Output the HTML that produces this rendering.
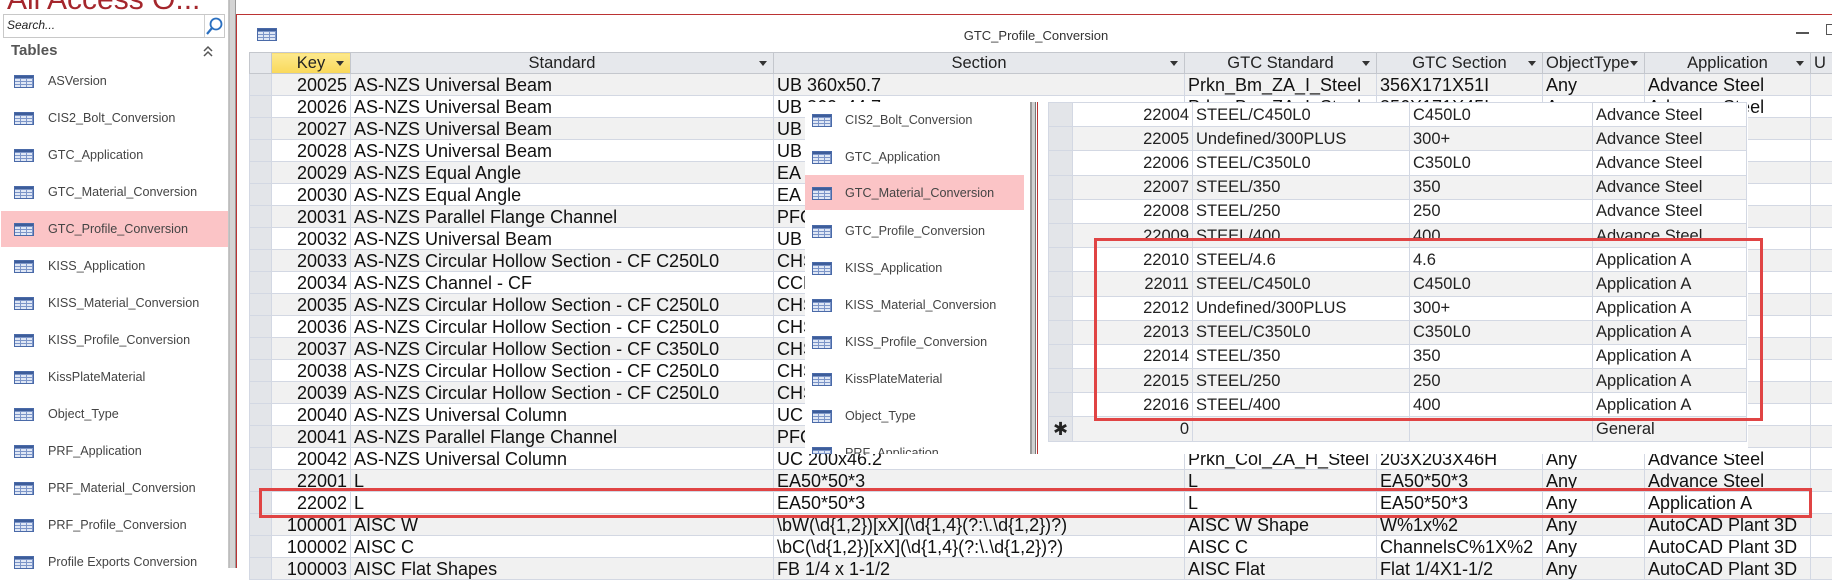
<!DOCTYPE html>
<html><head><meta charset="utf-8">
<style>
*{box-sizing:border-box;margin:0;padding:0}
body{width:1832px;height:568px;overflow:hidden;background:#fff;font-family:"Liberation Sans",Arial,sans-serif;position:relative}
.abs{position:absolute}
.nav{left:0;top:0;width:229px;height:568px;background:#fff;border-right:1px solid #c6c6c6}
.apptitle{left:7px;top:-17px;font-size:30px;color:#a4262c;white-space:nowrap}
.search{left:3px;top:14px;width:222px;height:24px;border:1px solid #c8c8c8;background:#fff}
.search span{position:absolute;left:3px;top:3px;font-size:12px;font-style:italic;color:#222}
.search .btn{position:absolute;right:0;top:0;width:20px;height:22px;border-left:1px solid #d0d0d0}
.tables{left:11px;top:42px;font-size:15px;font-weight:bold;color:#555}
.item{position:absolute;height:36px;font-size:12.6px;color:#444;white-space:nowrap}
.item .ic{position:absolute;top:12px;width:20px;height:13px;background:
 linear-gradient(#3d5d9a,#3d5d9a) 0 0/100% 3px no-repeat,#dfe7f5;border:1px solid #4a6aa8}
.item .ic:after{content:"";position:absolute;inset:2px 0 0 0;background:
 repeating-linear-gradient(90deg,transparent 0 5px,#7c95c8 5px 6px),
 repeating-linear-gradient(0deg,transparent 0 2px,#7c95c8 2px 3px)}
.grayv{left:229px;top:0;width:7px;height:568px;background:#d4d4d4;border-left:1px solid #bdbdbd;border-right:1px solid #9a9a9a}
.redv{left:236px;top:14px;width:1px;height:554px;background:#b33}
.redh{left:236px;top:14px;width:1596px;height:1px;background:#b33}
.title{left:236px;top:28px;width:1600px;text-align:center;font-size:13px;color:#333}
table{border-collapse:collapse;table-layout:fixed}
td{border:1px solid #d3d8e3;overflow:hidden;white-space:nowrap;padding:0 3px;color:#111}
#grid{position:absolute;left:249px;top:52px;width:1621px}
#grid td{height:22px;font-size:18px;line-height:20px}
#grid tr.h td{height:21px;background:#e6e8ec;border:1px solid #c4c7cd;color:#222;text-align:center;position:relative;font-size:16.5px}
#grid tr.h td.key{background:linear-gradient(#fde98d,#f9d85a)}
.arr{position:absolute;right:6px;top:8px;width:0;height:0;border-left:4px solid transparent;border-right:4px solid transparent;border-top:5px solid #333}
#grid td.sel,#pt td.sel{background:#e3e5e9}
#grid tr.g td{background:#f1f1f1}
#grid tr.g td.sel,#pt tr.g td.sel{background:#e3e5e9}
td.r{text-align:right}
.pnav{left:805px;top:102px;width:219px;height:352px;background:#fff;overflow:hidden}
.sep{left:1024px;top:102px;width:24px;height:352px;background:#fff}
.sep i{position:absolute;top:0;height:352px}
#pt{position:absolute;left:1048px;top:102px;width:698px}
#pt td{height:24.2px;font-size:16.5px;color:#222;line-height:22px}
#pt tr.g td{background:#f2f2f2}
.pbg{left:1048px;top:102px;width:700px;height:352px;background:#fff}
.rbox{position:absolute;border:3px solid #e04444}
</style></head><body>

<div class="abs nav">
 <div class="abs apptitle">All Access O...</div>
 <div class="abs search"><span>Search...</span><div class="btn">
  <svg width="20" height="22" viewBox="0 0 20 22"><circle cx="11" cy="9" r="5.5" fill="none" stroke="#2a6fc0" stroke-width="1.8"/><line x1="7" y1="13" x2="2" y2="19" stroke="#2a6fc0" stroke-width="2.2"/></svg></div></div>
 <div class="abs tables">Tables</div>
 <svg class="abs" style="left:202px;top:45px" width="12" height="12" viewBox="0 0 12 12"><path d="M2 6L6 2L10 6M2 11L6 7L10 11" fill="none" stroke="#555" stroke-width="1.5"/></svg>
 <div class="item" style="left:0;top:63px;width:229px"><div class="ic" style="left:14px"></div><span style="position:absolute;left:48px;top:11px">ASVersion</span></div>
 <div class="item" style="left:0;top:100px;width:229px"><div class="ic" style="left:14px"></div><span style="position:absolute;left:48px;top:11px">CIS2_Bolt_Conversion</span></div>
 <div class="item" style="left:0;top:137px;width:229px"><div class="ic" style="left:14px"></div><span style="position:absolute;left:48px;top:11px">GTC_Application</span></div>
 <div class="item" style="left:0;top:174px;width:229px"><div class="ic" style="left:14px"></div><span style="position:absolute;left:48px;top:11px">GTC_Material_Conversion</span></div>
 <div class="item" style="left:1px;top:211px;width:227px;background:#fbc4c6"><div class="ic" style="left:13px"></div><span style="position:absolute;left:47px;top:11px">GTC_Profile_Conversion</span></div>
 <div class="item" style="left:0;top:248px;width:229px"><div class="ic" style="left:14px"></div><span style="position:absolute;left:48px;top:11px">KISS_Application</span></div>
 <div class="item" style="left:0;top:285px;width:229px"><div class="ic" style="left:14px"></div><span style="position:absolute;left:48px;top:11px">KISS_Material_Conversion</span></div>
 <div class="item" style="left:0;top:322px;width:229px"><div class="ic" style="left:14px"></div><span style="position:absolute;left:48px;top:11px">KISS_Profile_Conversion</span></div>
 <div class="item" style="left:0;top:359px;width:229px"><div class="ic" style="left:14px"></div><span style="position:absolute;left:48px;top:11px">KissPlateMaterial</span></div>
 <div class="item" style="left:0;top:396px;width:229px"><div class="ic" style="left:14px"></div><span style="position:absolute;left:48px;top:11px">Object_Type</span></div>
 <div class="item" style="left:0;top:433px;width:229px"><div class="ic" style="left:14px"></div><span style="position:absolute;left:48px;top:11px">PRF_Application</span></div>
 <div class="item" style="left:0;top:470px;width:229px"><div class="ic" style="left:14px"></div><span style="position:absolute;left:48px;top:11px">PRF_Material_Conversion</span></div>
 <div class="item" style="left:0;top:507px;width:229px"><div class="ic" style="left:14px"></div><span style="position:absolute;left:48px;top:11px">PRF_Profile_Conversion</span></div>
 <div class="item" style="left:0;top:544px;width:229px"><div class="ic" style="left:14px"></div><span style="position:absolute;left:48px;top:11px">Profile Exports Conversion</span></div>
</div>
<div class="abs grayv"></div>
<div class="abs redv"></div>
<div class="abs redh"></div>
<div class="item" style="left:257px;top:16px;width:30px"><div class="ic" style="left:0"></div></div>
<div class="abs title">GTC_Profile_Conversion</div>
<div class="abs" style="left:1796px;top:32px;width:13px;height:2px;background:#555"></div>
<div class="abs" style="left:1826px;top:24px;width:10px;height:11px;border:1px solid #555"></div>

<table id="grid">
<colgroup><col style="width:22px"><col style="width:79px"><col style="width:423px"><col style="width:411px"><col style="width:192px"><col style="width:166px"><col style="width:102px"><col style="width:166px"><col style="width:60px"></colgroup>
<tr class="h"><td class="sel"></td><td class="key">Key<i class="arr"></i></td><td>Standard<i class="arr"></i></td><td>Section<i class="arr"></i></td><td>GTC Standard<i class="arr"></i></td><td>GTC Section<i class="arr"></i></td><td style="text-align:left">ObjectType<i class="arr"></i></td><td>Application<i class="arr"></i></td><td style="text-align:left">U</td></tr>
<tr class="g"><td class="sel"></td><td class="r">20025</td><td>AS-NZS Universal Beam</td><td>UB 360x50.7</td><td>Prkn_Bm_ZA_I_Steel</td><td>356X171X51I</td><td>Any</td><td>Advance Steel</td><td></td></tr>
<tr><td class="sel"></td><td class="r">20026</td><td>AS-NZS Universal Beam</td><td>UB 360x44.7</td><td>Prkn_Bm_ZA_I_Steel</td><td>356X171X45I</td><td>Any</td><td>Advance Steel</td><td></td></tr>
<tr class="g"><td class="sel"></td><td class="r">20027</td><td>AS-NZS Universal Beam</td><td>UB 310x40.4</td><td></td><td></td><td></td><td></td><td></td></tr>
<tr><td class="sel"></td><td class="r">20028</td><td>AS-NZS Universal Beam</td><td>UB 310x46.2</td><td></td><td></td><td></td><td></td><td></td></tr>
<tr class="g"><td class="sel"></td><td class="r">20029</td><td>AS-NZS Equal Angle</td><td>EA 100x100x6</td><td></td><td></td><td></td><td></td><td></td></tr>
<tr><td class="sel"></td><td class="r">20030</td><td>AS-NZS Equal Angle</td><td>EA 75x75x6</td><td></td><td></td><td></td><td></td><td></td></tr>
<tr class="g"><td class="sel"></td><td class="r">20031</td><td>AS-NZS Parallel Flange Channel</td><td>PFC 150</td><td></td><td></td><td></td><td></td><td></td></tr>
<tr><td class="sel"></td><td class="r">20032</td><td>AS-NZS Universal Beam</td><td>UB 250x37.3</td><td></td><td></td><td></td><td></td><td></td></tr>
<tr class="g"><td class="sel"></td><td class="r">20033</td><td>AS-NZS Circular Hollow Section - CF C250L0</td><td>CHS</td><td></td><td></td><td></td><td></td><td></td></tr>
<tr><td class="sel"></td><td class="r">20034</td><td>AS-NZS Channel - CF</td><td>CCF</td><td></td><td></td><td></td><td></td><td></td></tr>
<tr class="g"><td class="sel"></td><td class="r">20035</td><td>AS-NZS Circular Hollow Section - CF C250L0</td><td>CHS</td><td></td><td></td><td></td><td></td><td></td></tr>
<tr><td class="sel"></td><td class="r">20036</td><td>AS-NZS Circular Hollow Section - CF C250L0</td><td>CHS</td><td></td><td></td><td></td><td></td><td></td></tr>
<tr class="g"><td class="sel"></td><td class="r">20037</td><td>AS-NZS Circular Hollow Section - CF C350L0</td><td>CHS</td><td></td><td></td><td></td><td></td><td></td></tr>
<tr><td class="sel"></td><td class="r">20038</td><td>AS-NZS Circular Hollow Section - CF C250L0</td><td>CHS</td><td></td><td></td><td></td><td></td><td></td></tr>
<tr class="g"><td class="sel"></td><td class="r">20039</td><td>AS-NZS Circular Hollow Section - CF C250L0</td><td>CHS</td><td></td><td></td><td></td><td></td><td></td></tr>
<tr><td class="sel"></td><td class="r">20040</td><td>AS-NZS Universal Column</td><td>UC</td><td></td><td></td><td></td><td></td><td></td></tr>
<tr class="g"><td class="sel"></td><td class="r">20041</td><td>AS-NZS Parallel Flange Channel</td><td>PFC</td><td></td><td></td><td></td><td></td><td></td></tr>
<tr><td class="sel"></td><td class="r">20042</td><td>AS-NZS Universal Column</td><td>UC 200x46.2</td><td>Prkn_Col_ZA_H_Steel</td><td>203X203X46H</td><td>Any</td><td>Advance Steel</td><td></td></tr>
<tr class="g"><td class="sel"></td><td class="r">22001</td><td>L</td><td>EA50*50*3</td><td>L</td><td>EA50*50*3</td><td>Any</td><td>Advance Steel</td><td></td></tr>
<tr><td class="sel"></td><td class="r">22002</td><td>L</td><td>EA50*50*3</td><td>L</td><td>EA50*50*3</td><td>Any</td><td>Application A</td><td></td></tr>
<tr class="g"><td class="sel"></td><td class="r">100001</td><td>AISC W</td><td>\bW(\d{1,2})[xX](\d{1,4}(?:\.\d{1,2})?)</td><td>AISC W Shape</td><td>W%1x%2</td><td>Any</td><td>AutoCAD Plant 3D</td><td></td></tr>
<tr><td class="sel"></td><td class="r">100002</td><td>AISC C</td><td>\bC(\d{1,2})[xX](\d{1,4}(?:\.\d{1,2})?)</td><td>AISC C</td><td>ChannelsC%1X%2</td><td>Any</td><td>AutoCAD Plant 3D</td><td></td></tr>
<tr class="g"><td class="sel"></td><td class="r">100003</td><td>AISC Flat Shapes</td><td>FB 1/4 x 1-1/2</td><td>AISC Flat</td><td>Flat 1/4X1-1/2</td><td>Any</td><td>AutoCAD Plant 3D</td><td></td></tr>
</table>

<div class="abs pnav">
 <div class="item" style="left:0;top:0;width:219px"><div class="ic" style="left:7px"></div><span style="position:absolute;left:40px;top:11px">CIS2_Bolt_Conversion</span></div>
 <div class="item" style="left:0;top:37px;width:219px"><div class="ic" style="left:7px"></div><span style="position:absolute;left:40px;top:11px">GTC_Application</span></div>
 <div class="item" style="left:0;top:73px;width:219px;height:35px;background:#fbc4c6"><div class="ic" style="left:7px"></div><span style="position:absolute;left:40px;top:11px">GTC_Material_Conversion</span></div>
 <div class="item" style="left:0;top:111px;width:219px"><div class="ic" style="left:7px"></div><span style="position:absolute;left:40px;top:11px">GTC_Profile_Conversion</span></div>
 <div class="item" style="left:0;top:148px;width:219px"><div class="ic" style="left:7px"></div><span style="position:absolute;left:40px;top:11px">KISS_Application</span></div>
 <div class="item" style="left:0;top:185px;width:219px"><div class="ic" style="left:7px"></div><span style="position:absolute;left:40px;top:11px">KISS_Material_Conversion</span></div>
 <div class="item" style="left:0;top:222px;width:219px"><div class="ic" style="left:7px"></div><span style="position:absolute;left:40px;top:11px">KISS_Profile_Conversion</span></div>
 <div class="item" style="left:0;top:259px;width:219px"><div class="ic" style="left:7px"></div><span style="position:absolute;left:40px;top:11px">KissPlateMaterial</span></div>
 <div class="item" style="left:0;top:296px;width:219px"><div class="ic" style="left:7px"></div><span style="position:absolute;left:40px;top:11px">Object_Type</span></div>
 <div class="item" style="left:0;top:333px;width:219px"><div class="ic" style="left:7px"></div><span style="position:absolute;left:40px;top:11px">PRF_Application</span></div>
</div>
<div class="abs sep"><i style="left:6px;width:2px;background:#9a9a9a"></i><i style="left:8px;width:3px;background:#d0d0d0"></i><i style="left:11px;width:1px;background:#777"></i><i style="left:13px;width:1px;background:#b33"></i></div>
<div class="abs pbg"></div>
<table id="pt">
<colgroup><col style="width:24px"><col style="width:120px"><col style="width:217px"><col style="width:183px"><col style="width:154px"></colgroup>
<tr><td class="sel"></td><td class="r">22004</td><td>STEEL/C450L0</td><td>C450L0</td><td>Advance Steel</td></tr>
<tr class="g"><td class="sel"></td><td class="r">22005</td><td>Undefined/300PLUS</td><td>300+</td><td>Advance Steel</td></tr>
<tr><td class="sel"></td><td class="r">22006</td><td>STEEL/C350L0</td><td>C350L0</td><td>Advance Steel</td></tr>
<tr class="g"><td class="sel"></td><td class="r">22007</td><td>STEEL/350</td><td>350</td><td>Advance Steel</td></tr>
<tr><td class="sel"></td><td class="r">22008</td><td>STEEL/250</td><td>250</td><td>Advance Steel</td></tr>
<tr class="g"><td class="sel"></td><td class="r">22009</td><td>STEEL/400</td><td>400</td><td>Advance Steel</td></tr>
<tr><td class="sel"></td><td class="r">22010</td><td>STEEL/4.6</td><td>4.6</td><td>Application A</td></tr>
<tr class="g"><td class="sel"></td><td class="r">22011</td><td>STEEL/C450L0</td><td>C450L0</td><td>Application A</td></tr>
<tr><td class="sel"></td><td class="r">22012</td><td>Undefined/300PLUS</td><td>300+</td><td>Application A</td></tr>
<tr class="g"><td class="sel"></td><td class="r">22013</td><td>STEEL/C350L0</td><td>C350L0</td><td>Application A</td></tr>
<tr><td class="sel"></td><td class="r">22014</td><td>STEEL/350</td><td>350</td><td>Application A</td></tr>
<tr class="g"><td class="sel"></td><td class="r">22015</td><td>STEEL/250</td><td>250</td><td>Application A</td></tr>
<tr><td class="sel"></td><td class="r">22016</td><td>STEEL/400</td><td>400</td><td>Application A</td></tr>
<tr class="g"><td class="sel" style="text-align:center;font-size:18px">✱</td><td class="r">0</td><td></td><td></td><td>General</td></tr>
</table>

<div class="rbox" style="left:1094px;top:238px;width:669px;height:183px"></div>
<div class="rbox" style="left:259px;top:488px;width:1553px;height:30px"></div>
</body></html>
